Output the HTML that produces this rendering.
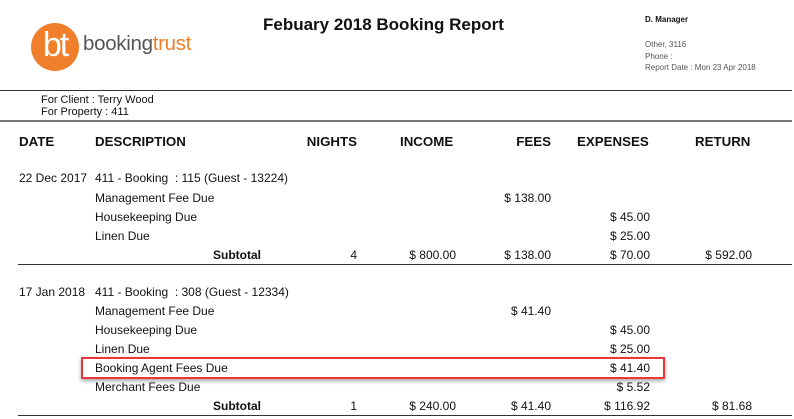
<!DOCTYPE html><html><head><style>
body{margin:0;width:794px;height:419px;background:#fff;position:relative;overflow:hidden;font-family:"Liberation Sans",Arial,sans-serif;color:#111}
div{position:absolute;white-space:nowrap}
.t{font-size:12px;line-height:14px}
.r{text-align:right}
.h{font-size:13.3px;font-weight:bold;line-height:16px;top:134px}
.ln{height:1px;background:#333}
</style></head><body>
<div style="left:31px;top:23px;width:48px;height:48px;border-radius:50%;background:#f07f2c;color:#fff;font-size:34px;line-height:44px;text-align:center;letter-spacing:-2px;font-weight:300">bt</div>
<div style="left:83px;top:33px;font-size:20.5px;line-height:22px;color:#555;letter-spacing:-0.3px">booking<span style="color:#f07f2c">trust</span></div>
<div style="left:263px;top:15px;font-size:17px;font-weight:bold;line-height:19px">Febuary 2018 Booking Report</div>
<div style="left:645px;top:15px;font-size:8px;font-weight:bold">D. Manager</div>
<div style="left:645px;top:39px;font-size:8px;color:#555;line-height:11.5px">Other, 3116<br>Phone :<br>Report Date : Mon 23 Apr 2018</div>
<div class="ln" style="left:0;top:90px;width:792px;height:1px"></div>
<div class="t" style="left:41px;top:94px;font-size:11px;line-height:12px">For Client : Terry Wood<br>For Property : 411</div>
<div class="ln" style="left:0;top:120px;width:792px;height:2px;background:#777"></div>
<div class="h" style="left:19px">DATE</div>
<div class="h" style="left:95px">DESCRIPTION</div>
<div class="h r" style="left:257px;width:100px">NIGHTS</div>
<div class="h" style="left:400px">INCOME</div>
<div class="h r" style="left:451px;width:100px">FEES</div>
<div class="h" style="left:577px">EXPENSES</div>
<div class="h" style="left:695px">RETURN</div>

<div class="t" style="left:19px;top:171px">22 Dec 2017</div>
<div class="t" style="left:95px;top:171px">411 - Booking &nbsp;: 115 (Guest - 13224)</div>
<div class="t" style="left:95px;top:191px">Management Fee Due</div>
<div class="t r" style="left:451px;width:100px;top:191px">$ 138.00</div>
<div class="t" style="left:95px;top:210px">Housekeeping Due</div>
<div class="t r" style="left:550px;width:100px;top:210px">$ 45.00</div>
<div class="t" style="left:95px;top:229px">Linen Due</div>
<div class="t r" style="left:550px;width:100px;top:229px">$ 25.00</div>
<div class="t" style="left:213px;top:248px;font-weight:bold">Subtotal</div>
<div class="t r" style="left:257px;width:100px;top:248px">4</div>
<div class="t r" style="left:356px;width:100px;top:248px">$ 800.00</div>
<div class="t r" style="left:451px;width:100px;top:248px">$ 138.00</div>
<div class="t r" style="left:550px;width:100px;top:248px">$ 70.00</div>
<div class="t r" style="left:652px;width:100px;top:248px">$ 592.00</div>
<div class="ln" style="left:18px;top:264px;width:774px"></div>

<div class="t" style="left:19px;top:285px">17 Jan 2018</div>
<div class="t" style="left:95px;top:285px">411 - Booking &nbsp;: 308 (Guest - 12334)</div>
<div class="t" style="left:95px;top:304px">Management Fee Due</div>
<div class="t r" style="left:451px;width:100px;top:304px">$ 41.40</div>
<div class="t" style="left:95px;top:323px">Housekeeping Due</div>
<div class="t r" style="left:550px;width:100px;top:323px">$ 45.00</div>
<div class="t" style="left:95px;top:342px">Linen Due</div>
<div class="t r" style="left:550px;width:100px;top:342px">$ 25.00</div>
<div style="left:81px;top:357px;width:580px;height:18px;border:2px solid #e8363c;box-shadow:0 2px 4px rgba(0,0,0,.35)"></div>
<div class="t" style="left:95px;top:361px">Booking Agent Fees Due</div>
<div class="t r" style="left:550px;width:100px;top:361px">$ 41.40</div>
<div class="t" style="left:95px;top:380px">Merchant Fees Due</div>
<div class="t r" style="left:550px;width:100px;top:380px">$ 5.52</div>
<div class="t" style="left:213px;top:399px;font-weight:bold">Subtotal</div>
<div class="t r" style="left:257px;width:100px;top:399px">1</div>
<div class="t r" style="left:356px;width:100px;top:399px">$ 240.00</div>
<div class="t r" style="left:451px;width:100px;top:399px">$ 41.40</div>
<div class="t r" style="left:550px;width:100px;top:399px">$ 116.92</div>
<div class="t r" style="left:652px;width:100px;top:399px">$ 81.68</div>
<div class="ln" style="left:18px;top:415px;width:774px"></div>
</body></html>
